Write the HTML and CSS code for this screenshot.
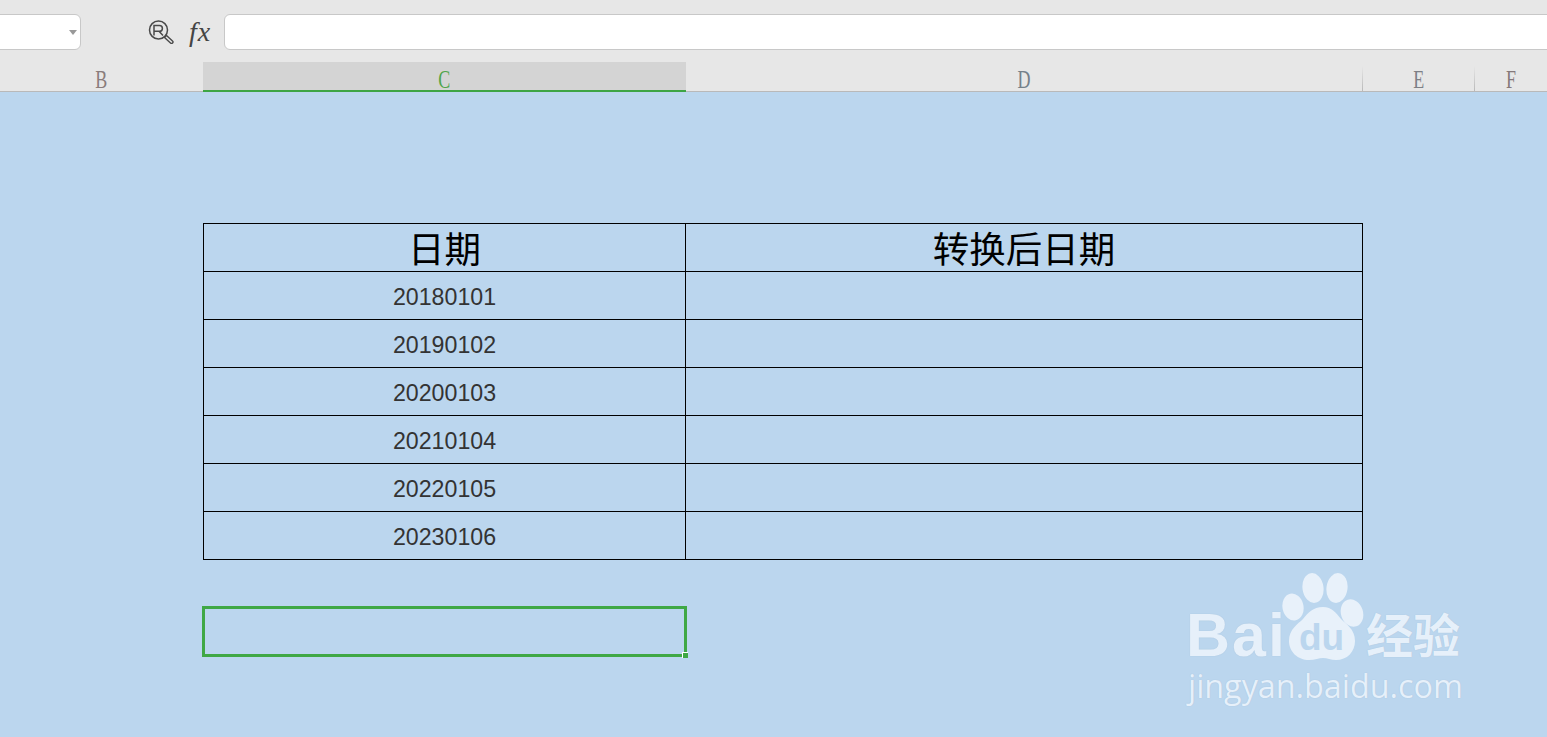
FILE: index.html
```html
<!DOCTYPE html>
<html lang="zh-CN">
<head>
<meta charset="utf-8">
<title>日期转换</title>
<link rel="stylesheet" href="styles.css">
</head>
<body>
<header class="toolbar">
  <div class="namebox"><span class="caret"></span></div>
  <div class="tools">
    <svg class="zoom-icon" width="26" height="28" viewBox="0 0 26 28" aria-hidden="true">
      <circle cx="10.5" cy="11" r="9" fill="none" stroke="#4a4a4a" stroke-width="1.5"/>
      <path d="M6 16.5V6.5h5.5a2.9 2.9 0 0 1 0 5.8H6M11 12.3l4 4.2" fill="none" stroke="#4a4a4a" stroke-width="1.5"/>
      <path d="M16.5 18.5l2-2 6 5.4a1.4 1.4 0 0 1-2 2.1z" fill="#e7e7e7" stroke="#4a4a4a" stroke-width="1.4"/>
    </svg>
    <span class="fx">fx</span>
  </div>
  <div class="formula"></div>
</header>
<nav class="columns">
  <div class="col col-b"><span class="letter">B</span></div>
  <div class="col col-c"><span class="letter">C</span></div>
  <div class="col col-d"><span class="letter">D</span></div>
  <div class="col col-e"><span class="letter">E</span></div>
  <div class="col col-f"><span class="letter">F</span></div>
</nav>
<main class="sheet">
  <table class="grid">
    <thead>
      <tr><th class="w1">日期</th><th class="w2">转换后日期</th></tr>
    </thead>
    <tbody>
      <tr><td>20180101</td><td></td></tr>
      <tr><td>20190102</td><td></td></tr>
      <tr><td>20200103</td><td></td></tr>
      <tr><td>20210104</td><td></td></tr>
      <tr><td>20220105</td><td></td></tr>
      <tr><td>20230106</td><td></td></tr>
    </tbody>
  </table>
  <div class="selection"><span class="handle"></span></div>
  <div class="watermark">
    <div class="wm-top">
      <span class="wm-bai">Bai</span>
      <div class="wm-paw">
        <svg width="82" height="88" viewBox="0 0 82 88" aria-hidden="true">
          <ellipse cx="11" cy="35" rx="10.5" ry="13.5" transform="rotate(-12 11 35)"/>
          <ellipse cx="31" cy="16" rx="10.5" ry="15" transform="rotate(-8 31 16)"/>
          <ellipse cx="55" cy="16" rx="10.5" ry="15" transform="rotate(8 55 16)"/>
          <ellipse cx="70" cy="41" rx="11" ry="14" transform="rotate(-18 70 41)"/>
          <path d="M41 35c9 0 13 6 18 12 5 5 14 10 14 22 0 11-8 19-19 19-5 0-9-2-13-2s-8 2-14 2C16 88 7 80 7 69c0-12 9-17 14-22 5-6 10-12 20-12z"/>
        </svg>
        <span class="wm-du">du</span>
      </div>
      <span class="wm-cn">经验</span>
    </div>
    <div class="wm-url">jingyan.baidu.com</div>
  </div>
</main>
</body>
</html>
```
FILE: styles.css
```css
html, body {
  margin: 0;
  height: 737px;
  overflow: hidden;
  background: #bbd6ee;
}
.toolbar {
  display: flex;
  align-items: flex-start;
  height: 62px;
  box-sizing: border-box;
  padding-top: 14px;
  background: #e7e7e7;
}
.namebox {
  position: relative;
  flex: 0 0 90px;
  margin-left: -9px;
  height: 36px;
  box-sizing: border-box;
  background: #fff;
  border: 1px solid #c8c8c8;
  border-radius: 6px;
}
.caret {
  position: absolute;
  right: 3px;
  top: 15px;
  border-style: solid;
  border-width: 5px 4px 0;
  border-color: #999 transparent transparent;
}
.tools {
  flex: 0 0 143px;
  height: 36px;
  display: flex;
  align-items: center;
  padding-left: 67px;
  box-sizing: border-box;
}
.zoom-icon { display: block; margin-top: 2px; }
.fx {
  margin-left: 15px;
  font: italic 28px/36px "Liberation Serif", serif;
  color: #444;
  letter-spacing: 1px;
}
.formula {
  flex: 1;
  margin-right: -12px;
  height: 36px;
  box-sizing: border-box;
  background: #fff;
  border: 1px solid #c8c8c8;
  border-radius: 6px;
}
.columns {
  display: flex;
  height: 30px;
  box-sizing: border-box;
  background: #e7e7e7;
  border-bottom: 1px solid #b9b9b9;
}
.col {
  position: relative;
  text-align: center;
  font: 25px/35px "Liberation Serif", serif;
  color: #7d7f86;
  box-sizing: border-box;
}
.letter {
  display: inline-block;
  transform: scaleX(0.72);
}
.col-b { width: 203px; color: #8a7c7c; }
.col-c {
  width: 483px;
  height: 30px;
  background: #d4d4d4;
  color: #4fa54a;
  border-bottom: 2px solid #3ea544;
}
.col-d { width: 677px; color: #75808a; }
.col-e { width: 112px; }
.col-f { flex: 1; color: #85797a; }
.col-e::before, .col-f::before {
  content: "";
  position: absolute;
  left: -1px;
  top: 4px;
  bottom: 0;
  width: 1px;
  background: linear-gradient(#e7e7e7, #b9b9b9);
}
.sheet {
  position: relative;
  height: 645px;
  box-sizing: border-box;
  padding: 131px 0 0 203px;
}
.grid {
  border-collapse: separate;
  border-spacing: 0;
  table-layout: fixed;
  width: 1160px;
  border-left: 1px solid #000;
  border-top: 1px solid #000;
}
.w1 { width: 482px; }
.w2 { width: 677px; }
th, td {
  box-sizing: border-box;
  height: 48px;
  padding: 2px 0 0;
  text-align: center;
  border-right: 1px solid #000;
  border-bottom: 1px solid #000;
}
th {
  padding-top: 1px;
  font: 400 36.5px/44px "Noto Sans CJK SC", sans-serif;
  color: #000;
}
td {
  font: 23.2px/44px "Liberation Sans", sans-serif;
  color: #333;
}
.selection {
  position: absolute;
  left: 202px;
  top: 514px;
  width: 485px;
  height: 51px;
  box-sizing: border-box;
  border: 3px solid #3fa845;
}
.handle {
  position: absolute;
  right: -4px;
  bottom: -4px;
  width: 5px;
  height: 5px;
  background: #3fa845;
  border-top: 1px solid #fff;
  border-left: 1px solid #fff;
}
.watermark {
  position: absolute;
  left: 1186px;
  top: 480px;
  width: 290px;
  color: #e6f0fa;
  text-shadow: 0 0 1px #9db9d4;
}
.wm-top {
  display: flex;
  align-items: flex-end;
  height: 88px;
}
.wm-bai {
  flex: 0 0 96px;
  min-width: 0;
  font: 700 61px/60px "Liberation Sans", sans-serif;
  letter-spacing: 2px;
  margin-bottom: -5px;
}
.wm-paw {
  position: relative;
  flex: 0 0 82px;
  height: 88px;
}
.wm-paw svg { display: block; fill: #e8f1fa; }
.wm-du {
  position: absolute;
  left: 17px;
  top: 47px;
  font: 700 37px/37px "Liberation Sans", sans-serif;
  color: #bbd6ee;
  text-shadow: none;
}
.wm-cn {
  font: 700 47px/60px "Noto Sans CJK SC", sans-serif;
  margin: 0 0 -3px 2px;
  white-space: nowrap;
}
.wm-url {
  font: 400 32.3px/38px "Open Sans", sans-serif;
  margin: 6px 0 0 2px;
  white-space: nowrap;
}
```
